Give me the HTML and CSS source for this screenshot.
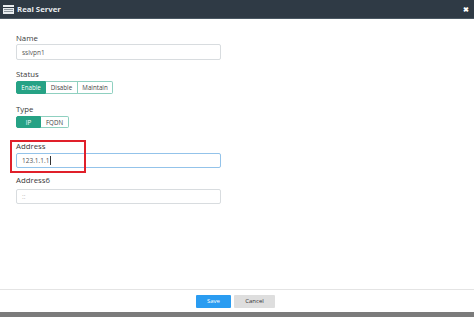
FILE: index.html
```html
<!DOCTYPE html>
<html>
<head>
<meta charset="utf-8">
<link rel="stylesheet" href="styles.css">
</head>
<body>
<div class="dialog">
  <div class="header">
    <svg class="hicon" width="11" height="9" viewBox="0 0 11 9">
      <rect x="0" y="0" width="11" height="9" fill="#e8ecef"/>
      <rect x="0" y="2" width="11" height="1" fill="#2f3a45"/>
      <rect x="1" y="4" width="9" height="1" fill="#8a949c"/>
      <rect x="1" y="6" width="9" height="1" fill="#8a949c"/>
    </svg>
    <span class="title">Real Server</span>
    <span class="close">&#x2716;</span>
  </div>
  <div class="main">
    <div class="group g-name">
      <div class="label">Name</div>
      <div class="input">sslvpn1</div>
    </div>
    <div class="group g-status">
      <div class="label">Status</div>
      <div class="seg">
        <span class="opt on">Enable</span><span class="opt">Disable</span><span class="opt">Maintain</span>
      </div>
    </div>
    <div class="group g-type">
      <div class="label">Type</div>
      <div class="seg">
        <span class="opt on ip">IP</span><span class="opt fqdn">FQDN</span>
      </div>
    </div>
    <div class="group g-addr">
      <div class="label">Address</div>
      <div class="input focus">123.1.1.1<span class="caret"></span></div>
      <div class="redbox"></div>
    </div>
    <div class="group g-addr6">
      <div class="label">Address6</div>
      <div class="input placeholder">::</div>
    </div>
  </div>
  <div class="footer">
    <span class="btn save">Save</span>
    <span class="btn cancel">Cancel</span>
  </div>
  <div class="strip"></div>
</div>
</body>
</html>
```
FILE: styles.css
```css
html, body {
  margin: 0;
  padding: 0;
  background: #ffffff;
}
.dialog {
  width: 474px;
  height: 317px;
  display: flex;
  flex-direction: column;
  font-family: "Open Sans", "Liberation Sans", sans-serif;
  color: #333;
}
.header {
  height: 19px;
  flex: none;
  background: #2f3a45;
  border-bottom: 1px solid #4b5863;
  box-sizing: border-box;
  display: flex;
  align-items: center;
  padding-left: 3px;
  padding-right: 5px;
}
.hicon {
  flex: none;
  margin-right: 3px;
}
.title {
  color: #e9edf0;
  font-weight: bold;
  font-size: 7.8px;
  flex: 1;
}
.close {
  color: #fff;
  font-size: 7px;
  font-weight: bold;
}
.main {
  flex: 1;
  padding: 14px 0 0 16px;
}
.group {
  position: relative;
}
.label {
  font-size: 7.8px;
  line-height: 10px;
  height: 10px;
  color: #3a3a3a;
  margin-bottom: 1px;
}
.input {
  width: 205px;
  height: 15px;
  border: 1px solid #d8dcdf;
  border-radius: 2px;
  box-sizing: border-box;
  font-size: 6.5px;
  line-height: 13px;
  padding-left: 5px;
  color: #555;
  display: flex;
  align-items: center;
}
.input.focus {
  border-color: #93c3ea;
}
.input.placeholder {
  color: #bbb;
}
.caret {
  display: inline-block;
  width: 1px;
  height: 9px;
  background: #333;
  margin-left: 1px;
}
.g-name .input { height: 16px; }
.g-name { margin-bottom: 9px; }
.g-status .label { margin-bottom: 2px; }
.g-status { margin-bottom: 10px; }
.g-type .label { margin-bottom: 2px; }
.g-type { margin-bottom: 13px; }
.g-addr .label { margin-bottom: 2px; }
.g-addr { margin-bottom: 7px; }
.g-addr6 .label { margin-bottom: 4px; }
.seg {
  display: flex;
  height: 12px;
}
.opt {
  border: 1px solid #8fd0c0;
  border-left: none;
  box-sizing: border-box;
  font-size: 6.2px;
  display: flex;
  align-items: center;
  justify-content: center;
  color: #444;
  background: #fff;
}
.opt:first-child {
  border-left: 1px solid #26a285;
  border-radius: 2px 0 0 2px;
}
.opt:last-child {
  border-radius: 0 2px 2px 0;
}
.g-status .opt:nth-child(1) { width: 30px; }
.g-status .opt:nth-child(2) { width: 32px; }
.g-status .opt:nth-child(3) { width: 35px; }
.g-status .seg { height: 13px; }
.opt.on {
  background: #26a285;
  border-color: #26a285;
  color: #fff;
}
.opt.ip { width: 25px; }
.opt.fqdn { width: 28px; }
.redbox {
  position: absolute;
  left: -6px;
  top: -1px;
  width: 76px;
  height: 33px;
  border: 2px solid #e0202a;
  box-sizing: border-box;
}
.footer {
  flex: none;
  height: 23px;
  border-top: 1px solid #e4e4e4;
  box-sizing: border-box;
  display: flex;
  align-items: center;
  justify-content: center;
  gap: 3px;
  padding-right: 3px;
}
.btn {
  height: 13px;
  border-radius: 1px;
  font-size: 6px;
  display: flex;
  align-items: center;
  justify-content: center;
}
.save {
  width: 35px;
  background: #2a9cf1;
  color: #fff;
}
.cancel {
  width: 41px;
  background: #dedede;
  color: #333;
}
.strip {
  flex: none;
  height: 5px;
  background: #7b7b7b;
}
```
